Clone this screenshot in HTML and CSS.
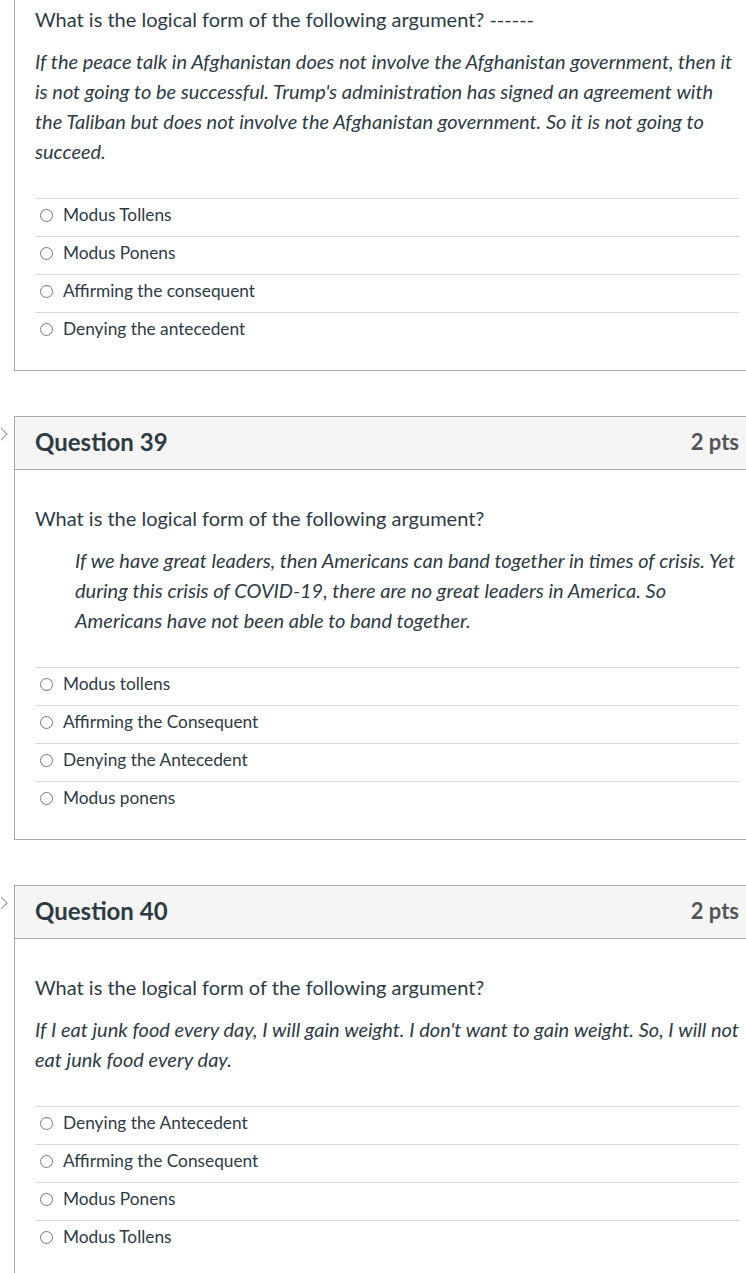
FILE: index.html
```html
<!DOCTYPE html>
<html lang="en">
<head>
<meta charset="utf-8">
<title>Quiz</title>
<link rel="stylesheet" href="styles.css">
</head>
<body>
<div class="page">
  <section class="question question-cut">
    <div class="qbody">
      <p class="qtext">What is the logical form of the following argument? ------</p>
      <p class="arg">If the peace talk in Afghanistan does not involve the Afghanistan government, then it is not going to be successful. Trump's administration has signed an agreement with the Taliban but does not involve the Afghanistan government. So it is not going to succeed.</p>
      <ul class="answers">
        <li><span class="radio"></span>Modus Tollens</li>
        <li><span class="radio"></span>Modus Ponens</li>
        <li><span class="radio"></span>Affirming the consequent</li>
        <li><span class="radio"></span>Denying the antecedent</li>
      </ul>
    </div>
  </section>

  <section class="question">
    <svg class="flag" width="8" height="18" viewBox="0 0 8 18"><polyline points="-2,1 6,9 -2,17" fill="none" stroke="#8fa0ad" stroke-width="1.2"/></svg>
    <header class="qhead"><h2>Question 39</h2><span class="pts">2 pts</span></header>
    <div class="qbody">
      <p class="qtext">What is the logical form of the following argument?</p>
      <p class="arg indent">If we have great leaders, then Americans can band together in times of crisis. Yet during this crisis of COVID-19, there are no great leaders in America. So Americans have not been able to band together.</p>
      <ul class="answers">
        <li><span class="radio"></span>Modus tollens</li>
        <li><span class="radio"></span>Affirming the Consequent</li>
        <li><span class="radio"></span>Denying the Antecedent</li>
        <li><span class="radio"></span>Modus ponens</li>
      </ul>
    </div>
  </section>

  <section class="question">
    <svg class="flag" width="8" height="18" viewBox="0 0 8 18"><polyline points="-2,1 6,9 -2,17" fill="none" stroke="#8fa0ad" stroke-width="1.2"/></svg>
    <header class="qhead"><h2>Question 40</h2><span class="pts">2 pts</span></header>
    <div class="qbody">
      <p class="qtext">What is the logical form of the following argument?</p>
      <p class="arg">If I eat junk food every day, I will gain weight. I don't want to gain weight. So, I will not eat junk food every day.</p>
      <ul class="answers">
        <li><span class="radio"></span>Denying the Antecedent</li>
        <li><span class="radio"></span>Affirming the Consequent</li>
        <li><span class="radio"></span>Modus Ponens</li>
        <li><span class="radio"></span>Modus Tollens</li>
      </ul>
    </div>
  </section>
</div>
</body>
</html>
```

FILE: styles.css
```css
html, body {
  margin: 0;
  padding: 0;
  background: #ffffff;
  overflow: hidden;
}
body {
  font-family: Lato, "Open Sans", "Liberation Sans", sans-serif;
  color: #2d3b45;
}
.page {
  display: flex;
  flex-direction: column;
  align-items: flex-start;
  gap: 45px;
  padding-left: 14px;
}
.question {
  position: relative;
  box-sizing: border-box;
  width: 746px;
  flex: none;
  border: 1px solid #a9a9a9;
  background: #fff;
}
.question-cut {
  border-top: none;
}
.flag {
  position: absolute;
  left: -14px;
  top: 8px;
}
.qhead {
  display: flex;
  align-items: center;
  justify-content: space-between;
  box-sizing: border-box;
  height: 53px;
  padding: 0 20px 3px;
  background: #f5f5f5;
  border-bottom: 1px solid #a9a9a9;
}
.qhead h2 {
  margin: 0;
  font-size: 24px;
  font-weight: 700;
  color: #2d3b45;
}
.pts {
  font-size: 22px;
  font-weight: 700;
  color: #555;
}
.qbody {
  padding: 33px 20px 20px 20px;
}
.question-cut .qbody {
  padding-top: 4px;
}
.qtext {
  margin: 0 0 12px;
  font-size: 20px;
  line-height: 30px;
}
.arg {
  margin: 0 0 32px;
  font-size: 20px;
  line-height: 30px;
  font-style: italic;
}
.arg.indent {
  margin-left: 40px;
}
.answers {
  list-style: none;
  margin: 0;
  padding: 0;
}
.answers li {
  display: flex;
  align-items: center;
  gap: 10px;
  border-top: 1px solid #dcdcdc;
  padding: 5px 0 10px 5px;
  font-size: 17.3px;
  line-height: 22px;
}
.radio {
  flex: none;
  width: 11px;
  height: 11px;
  border: 1px solid #777;
  border-radius: 50%;
  margin-top: 1px;
}
```
